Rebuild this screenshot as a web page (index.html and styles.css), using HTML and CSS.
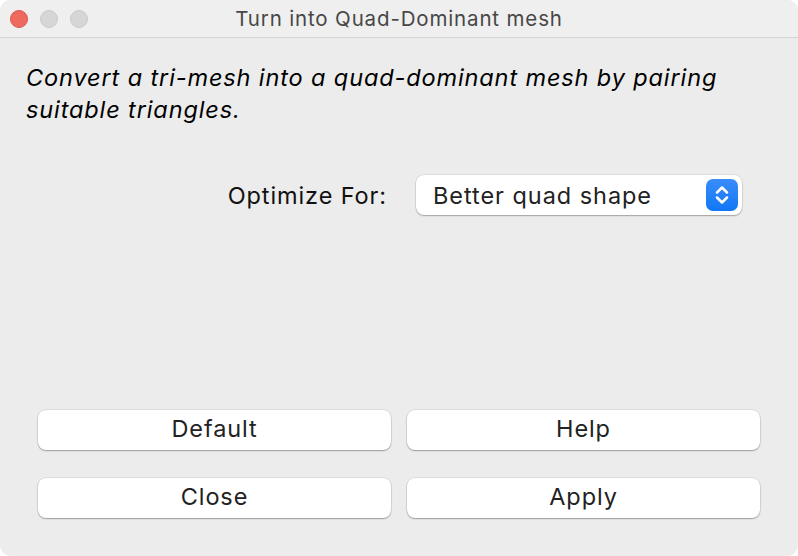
FILE: index.html
```html
<!DOCTYPE html>
<html>
<head>
<meta charset="utf-8">
<link rel="stylesheet" href="styles.css">
</head>
<body>
<div class="window">
  <div class="titlebar">
    <div class="lights">
      <span class="light red"></span>
      <span class="light grey"></span>
      <span class="light grey"></span>
    </div>
    <div class="title">Turn into Quad-Dominant mesh</div>
  </div>
  <div class="content">
    <p class="desc">Convert a tri-mesh into a quad-dominant mesh by pairing suitable triangles.</p>
    <div class="form-row">
      <label class="label">Optimize For:</label>
      <div class="select">
        <span class="select-text">Better quad shape</span>
        <span class="stepper">
          <svg width="32" height="32" viewBox="0 0 32 32">
            <path d="M11 13.5 L16 8.5 L21 13.5" fill="none" stroke="#fff" stroke-width="2.5" stroke-linecap="round" stroke-linejoin="round"/>
            <path d="M11 18.5 L16 23.5 L21 18.5" fill="none" stroke="#fff" stroke-width="2.5" stroke-linecap="round" stroke-linejoin="round"/>
          </svg>
        </span>
      </div>
    </div>
    <div class="buttons">
      <button class="btn">Default</button>
      <button class="btn">Help</button>
      <button class="btn">Close</button>
      <button class="btn">Apply</button>
    </div>
  </div>
</div>
</body>
</html>
```
FILE: styles.css
```css
html, body {
  margin: 0;
  padding: 0;
  background: #ffffff;
}
body {
  font-family: "Inter", "Liberation Sans", sans-serif;
  width: 798px;
  height: 556px;
  overflow: hidden;
}
.window {
  width: 798px;
  height: 556px;
  background: #ececec;
  border-radius: 11px;
  overflow: hidden;
  display: flex;
  flex-direction: column;
  box-sizing: border-box;
}
.titlebar {
  height: 38px;
  flex: 0 0 auto;
  box-sizing: border-box;
  background: #efefef;
  border-bottom: 1px solid #d4d4d4;
  display: flex;
  align-items: center;
  position: relative;
}
.lights {
  display: flex;
  gap: 12px;
  padding-left: 10px;
  padding-top: 1px;
}
.light {
  width: 18px;
  height: 18px;
  border-radius: 50%;
  box-sizing: border-box;
}
.light.red {
  background: #ee6a5f;
  border: 1px solid #d9564c;
}
.light.grey {
  background: #d6d6d6;
  border: 1px solid #c9c9c9;
}
.title {
  position: absolute;
  left: 0;
  right: 0;
  top: 0;
  height: 37px;
  line-height: 37px;
  text-align: center;
  font-size: 20.5px;
  letter-spacing: 0.85px;
  color: #474747;
  pointer-events: none;
}
.content {
  flex: 1 1 auto;
  display: flex;
  flex-direction: column;
  padding: 0 38px 38px 26px;
}
.desc {
  margin: 24px 0 0 0;
  font-size: 23.5px;
  letter-spacing: 0.88px;
  line-height: 32px;
  font-style: italic;
  color: #000;
  width: 740px;
}
.form-row {
  display: grid;
  grid-template-columns: 1fr 326px;
  column-gap: 29px;
  align-items: center;
  margin-top: 49px;
  padding-right: 18px;
}
.label {
  text-align: right;
  font-size: 23.5px;
  letter-spacing: 0.9px;
  color: #111;
}
.select {
  height: 40px;
  box-sizing: border-box;
  background: #fff;
  border-radius: 8px;
  box-shadow: 0 0 0 0.5px rgba(0,0,0,0.12), 0 1px 1.5px rgba(0,0,0,0.28);
  display: flex;
  align-items: center;
  justify-content: space-between;
  padding: 0 4px 0 17px;
}
.select-text {
  font-size: 23.5px;
  letter-spacing: 0.95px;
  color: #222;
}
.stepper {
  width: 32px;
  height: 32px;
  border-radius: 7px;
  background: linear-gradient(#3a8cfb, #1177f5);
  display: flex;
}
.buttons {
  margin-top: auto;
  margin-left: 12px;
  display: grid;
  grid-template-columns: 1fr 1fr;
  column-gap: 16px;
  row-gap: 28px;
}
.btn {
  height: 40px;
  border: none;
  background: #fff;
  border-radius: 8px;
  box-shadow: 0 0 0 0.5px rgba(0,0,0,0.12), 0 1px 1.5px rgba(0,0,0,0.3);
  font-family: "Inter", "Liberation Sans", sans-serif;
  font-size: 23.5px;
  letter-spacing: 0.9px;
  color: #222;
  padding: 0 0 3px 0;
}
```
